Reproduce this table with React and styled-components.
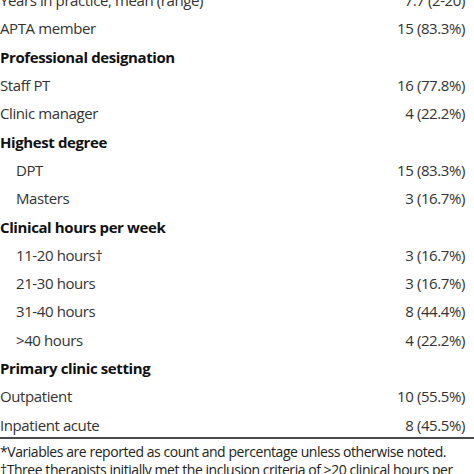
import styled, { createGlobalStyle } from "styled-components";

const Global = createGlobalStyle`
  html, body {
    margin: 0;
    padding: 0;
    background: #fff;
    overflow: hidden;
  }
  body {
    font-family: "Open Sans", "Noto Sans", sans-serif;
    color: #2b2b2b;
  }
`;

const Sheet = styled.div`
  width: 474px;
  height: 474px;
  overflow: hidden;
`;

const Table = styled.div`
  margin-top: -14px;
  display: flex;
  flex-direction: column;
`;

const Row = styled.div`
  display: flex;
  align-items: center;
  justify-content: space-between;
  height: 28.3px;
  padding-right: 9px;
  font-size: 15px;
  letter-spacing: -0.4px;
`;

const Label = styled.span`
  padding-left: ${(p) => (p.$indent ? "16px" : "0")};
  font-weight: ${(p) => (p.$head ? 700 : 400)};
  color: ${(p) => (p.$head ? "#111" : "#333")};
`;

const Value = styled.span`
  color: #333;
`;

const Rule = styled.div`
  margin-top: -2px;
  height: 2px;
  background: #4a4a4a;
`;

const Notes = styled.div`
  padding-top: 4px;
  font-size: 14px;
  line-height: 18px;
  letter-spacing: -0.45px;
  color: #222;
  white-space: nowrap;
`;

const rows = [
  { label: "Years in practice, mean (range)", value: "7.7 (2-20)" },
  { label: "APTA member", value: "15 (83.3%)" },
  { label: "Professional designation", head: true },
  { label: "Staff PT", value: "16 (77.8%)" },
  { label: "Clinic manager", value: "4 (22.2%)" },
  { label: "Highest degree", head: true },
  { label: "DPT", value: "15 (83.3%)", indent: true },
  { label: "Masters", value: "3 (16.7%)", indent: true },
  { label: "Clinical hours per week", head: true },
  { label: "11-20 hours†", value: "3 (16.7%)", indent: true },
  { label: "21-30 hours", value: "3 (16.7%)", indent: true },
  { label: "31-40 hours", value: "8 (44.4%)", indent: true },
  { label: ">40 hours", value: "4 (22.2%)", indent: true },
  { label: "Primary clinic setting", head: true },
  { label: "Outpatient", value: "10 (55.5%)" },
  { label: "Inpatient acute", value: "8 (45.5%)" },
];

export default function App() {
  return (
    <Sheet>
      <Global />
      <Table>
        {rows.map((r, i) => (
          <Row key={i}>
            <Label $head={r.head} $indent={r.indent}>
              {r.label}
            </Label>
            {r.value && <Value>{r.value}</Value>}
          </Row>
        ))}
      </Table>
      <Rule />
      <Notes>
        <div>*Variables are reported as count and percentage unless otherwise noted.</div>
        <div>†Three therapists initially met the inclusion criteria of ≥20 clinical hours per</div>
      </Notes>
    </Sheet>
  );
}
